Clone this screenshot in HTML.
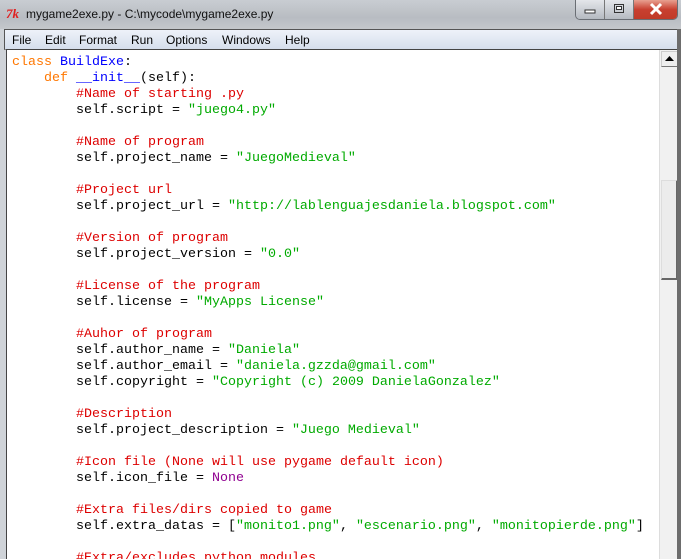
<html style="overflow:hidden"><head><style>
html,body{margin:0;width:681px;height:559px;overflow:hidden}
body{background:#cfd3d8;position:relative;font-family:"Liberation Sans",sans-serif}
.title{position:absolute;left:0;top:0;width:681px;height:29px;background:linear-gradient(#c9cdd2,#b8bcc2 60%,#c4c7cb)}
.title span{position:absolute;left:26px;top:7px;font-size:12px;color:#111}
.logo{position:absolute;left:6px;top:6px;color:#e02020;font:italic bold 13px "Liberation Serif",serif}
.btns{position:absolute;left:575px;top:0;height:19px;width:101px;border:1px solid #6a6e74;border-top:none;border-radius:0 0 5px 5px;overflow:hidden;display:flex}
.b{width:28px;height:19px;background:linear-gradient(#e4e6ea,#b5bac1);border-right:1px solid #777;position:relative}
.x{flex:1;background:linear-gradient(#e8a090,#c84030 50%,#c03a28);position:relative}
.menu{position:absolute;left:4px;top:29px;width:673px;height:19px;background:linear-gradient(#eef2f9,#d5deec);border:1px solid #555;border-bottom:1px solid #888;font-size:12px}
.menu span{position:absolute;top:3px;color:#000}
.ed{position:absolute;left:6px;top:49px;width:671px;height:510px;background:#fff;border-left:1px solid #444;border-top:1px solid #444}
.sb{position:absolute;left:652px;top:0;width:18px;height:510px;background:#f1f1f1;border-left:1px solid #ddd}
.up{position:absolute;left:1px;top:1px;width:15px;height:14px;background:#eee;border:1px solid #ccc;border-right-color:#777;border-bottom-color:#777}
.thumb{position:absolute;left:1px;top:130px;width:14px;height:97px;background:#ececec;border:1px solid #ddd;border-right:2px solid #666;border-bottom:2px solid #666}
pre{position:absolute;left:5px;top:5px;margin:0;font:13.33px/16px "Liberation Mono",monospace;color:#000}
.k{color:#ff7700}.d{color:#0000ff}.c{color:#dd0000}.s{color:#00aa00}.p{color:#900090}
.rb{position:absolute;left:677px;top:29px;width:4px;height:530px;background:#6d6d6d}
</style></head><body>
<div class="title"><div class="logo">7k</div><span>mygame2exe.py - C:\mycode\mygame2exe.py</span>
<div class="btns"><div class="b"><svg width="28" height="19"><rect x="9" y="10" width="10" height="3" fill="#fff" stroke="#333" stroke-width="1"/></svg></div><div class="b"><svg width="28" height="19"><rect x="9.5" y="4.5" width="9" height="8" fill="none" stroke="#333" stroke-width="1"/><rect x="11.5" y="6.5" width="5" height="3" fill="#fff" stroke="#333"/></svg></div><div class="x"><svg width="44" height="19"><path d="M17 4l10 10M27 4L17 14" stroke="#fff" stroke-width="3"/></svg></div></div></div>
<div class="menu"><span style="left:7px">File</span><span style="left:40px">Edit</span><span style="left:74px">Format</span><span style="left:126px">Run</span><span style="left:161px">Options</span><span style="left:217px">Windows</span><span style="left:280px">Help</span></div>
<div class="ed"><pre><span class="k">class</span> <span class="d">BuildExe</span>:
    <span class="k">def</span> <span class="d">__init__</span>(self):
        <span class="c">#Name of starting .py</span>
        self.script = <span class="s">"juego4.py"</span>

        <span class="c">#Name of program</span>
        self.project_name = <span class="s">"JuegoMedieval"</span>

        <span class="c">#Project url</span>
        self.project_url = <span class="s">"http://lablenguajesdaniela.blogspot.com"</span>

        <span class="c">#Version of program</span>
        self.project_version = <span class="s">"0.0"</span>

        <span class="c">#License of the program</span>
        self.license = <span class="s">"MyApps License"</span>

        <span class="c">#Auhor of program</span>
        self.author_name = <span class="s">"Daniela"</span>
        self.author_email = <span class="s">"daniela.gzzda@gmail.com"</span>
        self.copyright = <span class="s">"Copyright (c) 2009 DanielaGonzalez"</span>

        <span class="c">#Description</span>
        self.project_description = <span class="s">"Juego Medieval"</span>

        <span class="c">#Icon file (None will use pygame default icon)</span>
        self.icon_file = <span class="p">None</span>

        <span class="c">#Extra files/dirs copied to game</span>
        self.extra_datas = [<span class="s">"monito1.png"</span>, <span class="s">"escenario.png"</span>, <span class="s">"monitopierde.png"</span>]

        <span class="c">#Extra/excludes python modules</span></pre>
<div class="sb"><div class="up"><svg width="15" height="14"><path d="M3 9h9L7.5 4z" fill="#000"/></svg></div><div class="thumb"></div></div></div>
<div class="rb"></div>
</body></html>
